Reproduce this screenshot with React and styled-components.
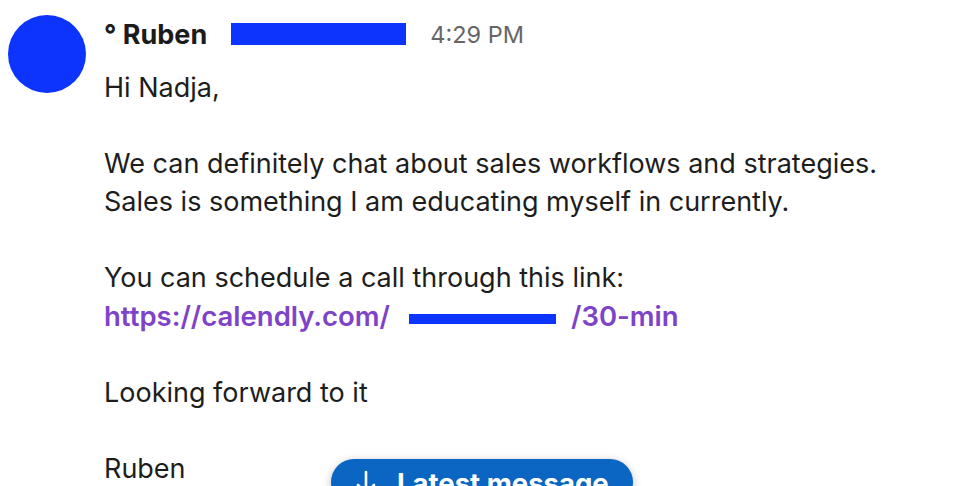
import React from "react";
import styled, { createGlobalStyle } from "styled-components";

const Global = createGlobalStyle`
  html, body { margin: 0; padding: 0; background: #fff; }
  body { font-family: Inter, "Noto Sans", sans-serif; color: #1d1d1d; overflow: hidden; }
`;

const Page = styled.div`
  position: relative;
  width: 967px;
  height: 486px;
  overflow: hidden;
  background: #fff;
`;

const Message = styled.div`
  display: flex;
  align-items: flex-start;
  gap: 18px;
  padding: 15px 0 0 8px;
`;

const Avatar = styled.div`
  flex: none;
  width: 78px;
  height: 78px;
  border-radius: 50%;
  background: #0d34fd;
`;

const Content = styled.div`
  display: flex;
  flex-direction: column;
`;

const Header = styled.div`
  display: flex;
  align-items: center;
  height: 38px;
`;

const Name = styled.span`
  font-size: 27px;
  font-weight: 700;
  color: #1b1b1b;
`;

const Redacted = styled.span`
  display: inline-block;
  background: #0d34fd;
  width: ${(p) => p.$w}px;
  height: ${(p) => p.$h}px;
  margin: 0 ${(p) => p.$mr}px 0 ${(p) => p.$ml}px;
  vertical-align: middle;
`;

const Time = styled.span`
  font-size: 23.5px;
  color: #666;
`;

const Body = styled.div`
  margin-top: 16px;
  font-size: 27px;
  line-height: 38px;
  color: #1d1d1d;
`;

const Para = styled.p`
  margin: 0 0 38px 0;
`;

const Link = styled.a`
  color: #7d43c9;
  font-size: 27.5px;
  font-weight: 600;
  text-decoration: none;
`;

const LatestButton = styled.button`
  position: absolute;
  left: 331px;
  top: 459px;
  width: 302px;
  height: 46px;
  border: none;
  border-radius: 23px;
  background: #0a66c2;
  color: #fff;
  display: flex;
  align-items: center;
  gap: 20px;
  padding: 2px 0 0 24px;
  font-family: Inter, "Noto Sans", sans-serif;
  font-size: 27.5px;
  font-weight: 700;
  box-shadow: 0 2px 8px rgba(0, 0, 0, 0.25);
`;

export default function App() {
  return (
    <Page>
      <Global />
      <Message>
        <Avatar />
        <Content>
          <Header>
            <Name>° Ruben</Name>
            <Redacted $w={175} $h={22} $ml={24} $mr={24} />
            <Time>4:29 PM</Time>
          </Header>
          <Body>
            <Para>Hi Nadja,</Para>
            <Para>
              We can definitely chat about sales workflows and strategies.
              <br />
              Sales is something I am educating myself in currently.
            </Para>
            <Para>
              You can schedule a call through this link:
              <br />
              <Link href="#">
                https://calendly.com/
                <Redacted $w={147} $h={10} $ml={19} $mr={15} />
                /30-min
              </Link>
            </Para>
            <Para>Looking forward to it</Para>
            <Para>Ruben</Para>
          </Body>
        </Content>
      </Message>
      <LatestButton>
        <svg width="22" height="26" viewBox="0 0 22 26" fill="none" stroke="#fff" strokeWidth="2.6" strokeLinecap="round" strokeLinejoin="round">
          <path d="M11 2 V23" />
          <path d="M3 15 L11 23 L19 15" />
        </svg>
        Latest message
      </LatestButton>
    </Page>
  );
}
